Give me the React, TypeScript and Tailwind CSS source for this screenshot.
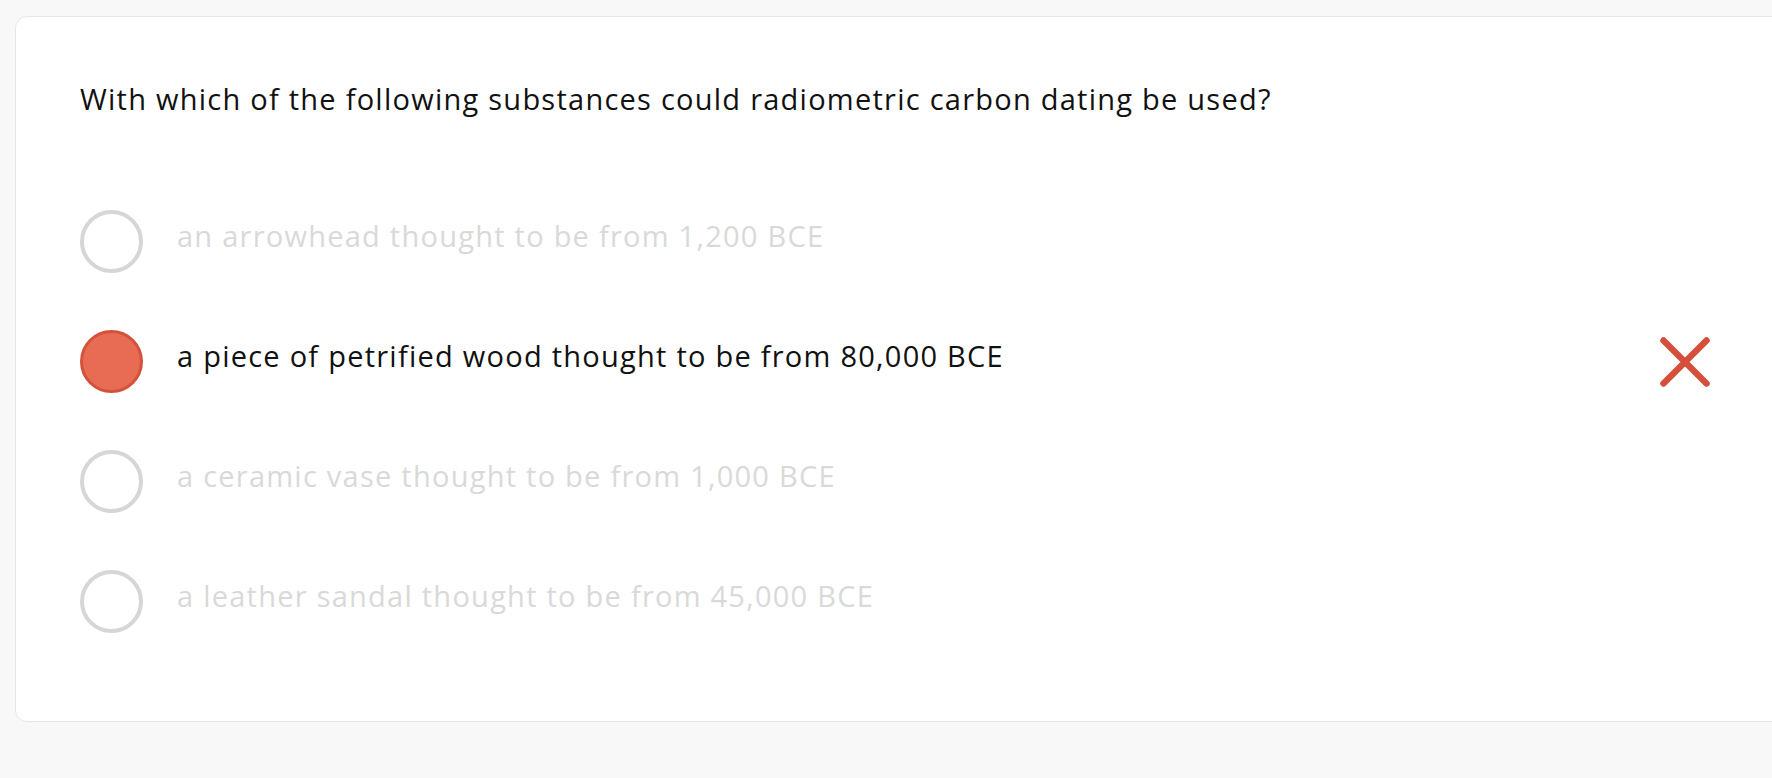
import React from 'react';

const options = [
  { id: 1, text: 'an arrowhead thought to be from 1,200 BCE', selected: false },
  { id: 2, text: 'a piece of petrified wood thought to be from 80,000 BCE', selected: true },
  { id: 3, text: 'a ceramic vase thought to be from 1,000 BCE', selected: false },
  { id: 4, text: 'a leather sandal thought to be from 45,000 BCE', selected: false },
];

const WrongMark = () => (
  <svg width="50" height="50" viewBox="0 0 50 50" fill="none">
    <path
      d="M3.5 3.5 L46.5 46.5 M46.5 3.5 L3.5 46.5"
      stroke="#d4503a"
      strokeWidth="6.5"
      strokeLinecap="round"
    />
  </svg>
);

const App = () => {
  return (
    <div className="h-[778px] w-full overflow-hidden bg-[#f8f8f8] pl-[15px] pt-[16px] font-['Open_Sans',sans-serif]">
      <div className="h-[706px] w-[1800px] rounded-[12px] border border-[#e4e7ea] bg-white pl-[64px] pt-[65px]">
        <p className="text-[29px] leading-[1.2] tracking-[0.043em] text-[#111]">
          With which of the following substances could radiometric carbon dating be used?
        </p>

        <div className="mt-[65px] w-[1630px]">
          {options.map((option) => (
            <div key={option.id} className="flex h-[120px] items-center">
              {option.selected ? (
                <span className="h-[63px] w-[63px] shrink-0 rounded-full border-[3px] border-[#d4513b] bg-[#e86c54]" />
              ) : (
                <span className="h-[63px] w-[63px] shrink-0 rounded-full border-4 border-[#d6d6d6] bg-white" />
              )}
              <span
                className={
                  option.selected
                    ? 'mb-[12px] ml-[34px] text-[29px] tracking-[0.043em] text-[#111]'
                    : 'mb-[12px] ml-[34px] text-[29px] tracking-[0.043em] text-[#d9d9d9]'
                }
              >
                {option.text}
              </span>
              {option.selected && (
                <span className="ml-auto flex">
                  <WrongMark />
                </span>
              )}
            </div>
          ))}
        </div>
      </div>
    </div>
  );
};

export default App;
